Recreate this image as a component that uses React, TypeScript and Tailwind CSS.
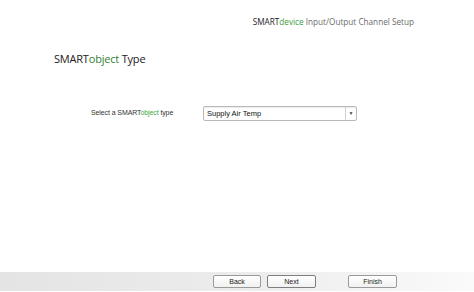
export default function App() {
  return (
    <div className="w-[474px] h-[292px] bg-white flex flex-col overflow-hidden font-['Open_Sans',sans-serif]">
      <div className="h-[27px] flex items-end justify-end pr-[60px] pb-[1px]">
        <span className="text-[8.2px] text-[#6b6b6b] leading-none">
          <span className="text-[#222]">SMART</span>
          <span className="text-[#3f9b3f]">device</span> Input/Output Channel Setup
        </span>
      </div>

      <div className="pl-[54px] pt-[26px] h-[58px]">
        <h1 className="text-[11px] leading-none text-[#222] tracking-[-0.2px]">
          SMART<span className="text-[#2f7f2f]">object</span> Type
        </h1>
      </div>

      <div className="flex items-center pl-[91px] mt-[21px]">
        <span className="w-[112px] text-[7px] text-[#333] font-['Liberation_Sans',sans-serif] tracking-[-0.1px]">
          Select a SMART<span className="text-[#3caa3c]">object</span> type
        </span>
        <div className="w-[154px] h-[15px] border border-[#b9b9b9] rounded-[2px] flex items-stretch bg-white shadow-[inset_0_1px_1px_rgba(0,0,0,0.08)]">
          <span className="flex-1 flex items-center pl-[3px] text-[7.5px] text-[#111] font-['Liberation_Sans',sans-serif]">
            Supply Air Temp
          </span>
          <span className="w-[11px] border-l border-[#d0d0d0] flex items-center justify-center text-[5px] text-[#444]">
            ▼
          </span>
        </div>
      </div>

      <div className="flex-1" />

      <div className="h-[19px] mb-[1px] bg-gradient-to-r from-[#e4e4e4] via-[#ececec] to-[#fafafa] flex items-center">
        <div className="w-[213px]" />
        <button className="w-[48px] h-[13px] border border-[#9a9a9a] rounded-[2px] bg-gradient-to-b from-white to-[#f1f1f1] text-[7px] text-[#222] font-['Liberation_Sans',sans-serif] leading-none">
          Back
        </button>
        <button className="ml-[6px] w-[49px] h-[13px] border border-[#7e7e7e] rounded-[2px] bg-gradient-to-b from-white to-[#f1f1f1] text-[7px] text-[#222] font-['Liberation_Sans',sans-serif] leading-none">
          Next
        </button>
        <button className="ml-[32px] w-[49px] h-[13px] border border-[#9a9a9a] rounded-[2px] bg-gradient-to-b from-white to-[#f1f1f1] text-[7px] text-[#222] font-['Liberation_Sans',sans-serif] leading-none">
          Finish
        </button>
      </div>
    </div>
  )
}
